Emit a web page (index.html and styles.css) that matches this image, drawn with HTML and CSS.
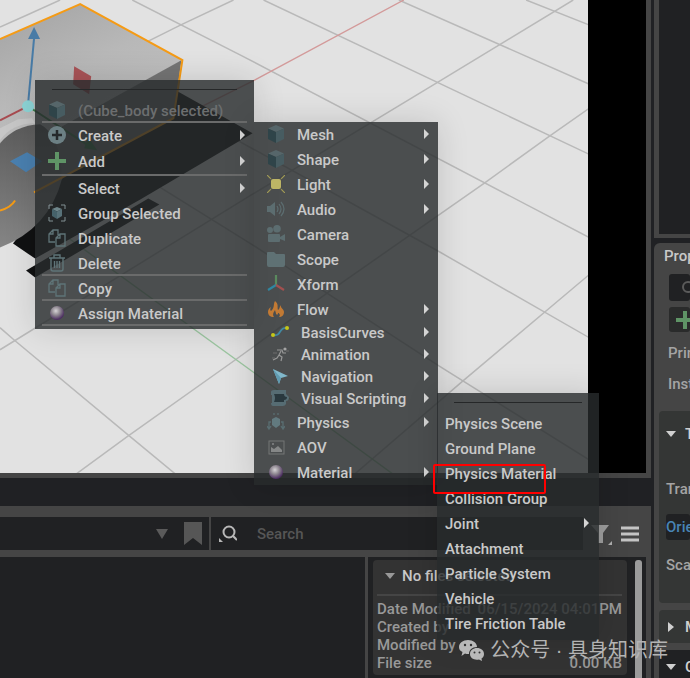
FILE: index.html
```html
<!DOCTYPE html>
<html lang="en">
<head>
<meta charset="utf-8">
<title>Stage editor</title>
<link rel="stylesheet" href="styles.css">
</head>
<body>
<svg class="defs" aria-hidden="true">
  <defs>
    <linearGradient id="topFace" x1="0" y1="0" x2="0.6" y2="1"><stop offset="0" stop-color="#a2a2a2"/><stop offset="0.5" stop-color="#b8b8b8"/><stop offset="1" stop-color="#c2c2c2"/></linearGradient>
    <linearGradient id="wheel" x1="0" y1="0" x2="0" y2="1"><stop offset="0" stop-color="#5c5c5c"/><stop offset="1" stop-color="#858585"/></linearGradient>
    <radialGradient id="ball" cx="0.42" cy="0.35" r="0.62"><stop offset="0" stop-color="#d6d3d6"/><stop offset="0.5" stop-color="#8e8790"/><stop offset="1" stop-color="#4d2f62"/></radialGradient>
    <symbol id="cube" viewBox="0 0 18 18"><path d="M9 0l8 3.500-8 3.500-8-3.500z" fill="#56666a"/><path d="M1 3.500l8 3.500v11l-8-4z" fill="#2f4449"/><path d="M17 3.500l-8 3.500v11l8-4z" fill="#475c61"/></symbol>
    <symbol id="plus-circle" viewBox="0 0 18 18"><circle cx="9" cy="9" r="9" fill="#6c8084"/><path d="M9 4v10M4 9h10" stroke="#25292b" stroke-width="2.500"/></symbol>
    <symbol id="plus" viewBox="0 0 18 18"><path d="M9 0v18M0 9h18" stroke="#5f9466" stroke-width="4"/></symbol>
    <symbol id="group" viewBox="0 0 18 18"><path d="M1 5V1h4M13 1h4v4M17 13v4h-4M5 17H1v-4" fill="none" stroke="#829094"/><path d="M9 3l5 2-5 2.500L4 5z" fill="#6f868b"/><path d="M4 5l5 2.500V15l-5-3z" fill="#46626a"/><path d="M14 5L9 7.500V15l5-3z" fill="#587279"/></symbol>
    <symbol id="copy" viewBox="0 0 18 18"><path d="M7 13H1V5l4-4h5v5M1 5h4V1M8 9l4-4h5v12H8zM8 9h4V5" fill="none" stroke="#5f7478" stroke-width="1.300"/></symbol>
    <symbol id="trash" viewBox="0 0 18 18"><path d="M1 4h16M6 4V1h6v3M3 4v11q0 2 2 2h8q2 0 2-2V4M6.500 7v7M9 7v7M11.500 7v7" fill="none" stroke="#5f7478" stroke-width="1.400"/></symbol>
    <symbol id="sphere" viewBox="0 0 18 18"><circle cx="9" cy="9" r="7" fill="url(#ball)"/></symbol>
    <symbol id="light" viewBox="0 0 18 18"><path d="M0 0l18 18M18 0L0 18" stroke="#a39c55" stroke-width="1.200"/><rect x="3" y="3" width="12" height="12" rx="3" fill="#4a4c4c"/><rect x="4" y="4" width="10" height="10" rx="2" fill="#bdb565"/></symbol>
    <symbol id="audio" viewBox="0 0 18 18"><path d="M0 6h3l5-4v14l-5-4H0z" fill="#5c6d70"/><path d="M10 6q2 3 0 6M12 4q4 5 0 10M14 2q6 7 0 14" fill="none" stroke="#5c6d70" stroke-width="1.200"/></symbol>
    <symbol id="camera" viewBox="0 0 18 18"><g fill="#5c6d70"><circle cx="3" cy="5" r="3"/><circle cx="10" cy="3.800" r="3.800"/><rect x="1" y="9" width="12" height="8" rx="1"/><path d="M13 12l5-3v7l-5-2z"/></g></symbol>
    <symbol id="folder" viewBox="0 0 18 18"><path d="M0 3q0-1 1-1h6l2 2h8q1 0 1 1v10q0 2-2 2H2q-2 0-2-2z" fill="#5f7174"/></symbol>
    <symbol id="axes" viewBox="0 0 18 18"><g fill="none" stroke-width="2.200"><path d="M9 10V0" stroke="#5a8a5e"/><path d="M9 10l-8 5" stroke="#2f86a0"/><path d="M9 10l8 5" stroke="#a2504f"/></g></symbol>
    <symbol id="flame" viewBox="0 0 18 18"><path d="M8 1c4 3 2 6 3 9 2-1 1-3 3-5-1 3 3 4 3 7 0 3-2 5-5 5 2-2 0-4-1-4 0 2-1 2-2 1 0-2-1-3-1-4-1 2-3 4-1 7-4 0-6-2-6-5 0-2 1-4 3-5-1 2-1 3 0 4C8 8 6 4 8 1z" fill="#c27a34"/></symbol>
    <symbol id="curve" viewBox="0 0 18 18"><path d="M2 12c9 2 5-8 14-7" fill="none" stroke="#4289a3" stroke-width="1.800"/><circle cx="2" cy="12" r="2" fill="#c5c618"/><circle cx="16" cy="5" r="2" fill="#c5c618"/></symbol>
    <symbol id="runner" viewBox="0 0 18 18"><circle cx="14" cy="4" r="1.600" fill="#a4a4a4"/><path d="M6 5l5 0 1 3 3 0M10 6L8 10l3 2-1 4M8 10l-2 3-4 2" fill="none" stroke="#989898" stroke-width="1.200"/><path d="M2 8h4M1 13h3M15 6h3" stroke="#777" stroke-width=".8"/></symbol>
    <symbol id="pointer" viewBox="0 0 18 18"><path d="M2 2l15 7-7 2-2 6z" fill="#80b8cb"/><path d="M2 2l8 9-2 6z" fill="#609bb1"/></symbol>
    <symbol id="script" viewBox="0 0 18 18"><path d="M3 1h12v4l3 3q0 4-3 4v3q-1 2-3 2H2q-2 0-2-3h1V6H0V3q0-2 3-2z" fill="#566c73"/><path d="M3 5h10q0 3 3 3 0 3-3 3v2H3q2-4 0-8z" fill="#29383e"/></symbol>
    <symbol id="physics" viewBox="0 0 18 18"><path d="M9 4l4 2v6l-4 3-4-3V6z" fill="#627a7f"/><path d="M7 0v2M11 0v2M4 9H2v7M0 13l2 3 2-3M14 9h2v7M14 13l2 3 2-3" fill="none" stroke="#596e72" stroke-width="1.300"/></symbol>
    <symbol id="picture" viewBox="0 0 18 18"><rect x="2" y="3" width="15" height="13" fill="none" stroke="#747676"/><path d="M4 14V9l3 2 4-3 4 4v2z" fill="#858787"/><circle cx="6" cy="6" r="1" fill="#858787"/></symbol>
  </defs>
</svg>

<div class="app">
  <main class="workspace">
    <section class="viewport" aria-label="Viewport">
      <svg class="scene" viewBox="0 0 588 472" preserveAspectRatio="xMinYMin slice" aria-hidden="true">
        <rect width="588" height="472" fill="#e2e2e2"/>
        <g fill="none" stroke="#b9b9b9" stroke-width="1.500">
          <path d="M525 0l63 25M398 0l190 84M263 0l325 154M132 0l108 55 348 182M150 92l288 159 150 86M155 184l95 59 188 122 150 94M0 327l15 13 114 95 46 38"/>
          <path d="M0 27l27-12L60 0M233 0l-53 25-40 20M572 0L437 82 250 195 120 275 0 349M588 108l-40 28-65 47-156 109-92 67-107 76-52 38M588 274l-126 106-108 93"/>
        </g>
        <path d="M403 0L254 80 62 176" stroke="#d39a9a" stroke-width="1.400" fill="none"/>
        <path d="M40 217l215 156 137 100" stroke="#9cc6a1" stroke-width="1.400" fill="none"/>
        <path d="M177 91l75 42-112 66L35 258l-22-15 50-66z" fill="#101112"/>
        <path d="M26 270l122-72 11 6L35 277z" fill="#101112"/>
        <path d="M0 39L80 4l102 56-120 66-62 30z" fill="url(#topFace)"/>
        <path d="M181 60L62 126l-28 66 139-74z" fill="#747474"/>
        <path d="M0 143q15-18 40-19 20 10 22 54-13 50-62 69z" fill="url(#wheel)"/>
        <path d="M0 140q12-17 35-17l-3-5-14 1L0 128z" fill="#c7c7c7"/>
        <path d="M0 39L80 4l102 56-9 58L34 192M0 210q11-3 15-10" fill="none" stroke="#f59b15" stroke-width="2"/>
        <path d="M74 66l17 10-2 18-16-10z" fill="#a95357"/>
        <path d="M0 120l28-14" stroke="#a84b50" stroke-width="2"/>
        <path d="M28 106l60 39" stroke="#387a45" stroke-width="2"/><path d="M88 137l9 13-13-2z" fill="#387a45"/>
        <path d="M28 104l6-66" stroke="#487ba6" stroke-width="2"/><path d="M34 27l6 12H28z" fill="#487ba6"/>
        <path d="M10 161l17-9 15 9-16 11z" fill="#4a80b0"/>
        <circle cx="28" cy="106" r="6" fill="#8dd5d7"/>
      </svg>
      <div class="letterbox"></div>
    </section>

    <section class="browser" aria-label="Content browser">
      <div class="toolbar">
        <div class="path">
          <svg width="12" height="10" aria-hidden="true"><path d="M0 0h12L6 10z" fill="#5a5a5a"/></svg>
          <svg width="18" height="23" aria-hidden="true"><path d="M0 0h18v23l-9-7-9 7z" fill="#565656"/></svg>
        </div>
        <label class="search">
          <svg width="18" height="18" aria-hidden="true"><circle cx="10" cy="7" r="5.500" fill="none" stroke="#b8b8b8" stroke-width="2"/><path d="M14 11l4 4" stroke="#b8b8b8" stroke-width="2.200"/><path d="M0 13l4 4H0z" fill="#b8b8b8"/></svg>
          <input type="text" placeholder="Search" aria-label="Search">
        </label>
        <button class="tool" aria-label="Filter"><svg width="22" height="22"><path d="M0 2h18l-6 8v10H7V10z" fill="#9d9d9d"/><path d="M21 18v4h-4z" fill="#b0b0b0"/></svg></button>
        <button class="tool" aria-label="Options"><svg width="18" height="16"><path d="M0 2h18M0 8h18M0 14h18" stroke="#c4c4c4" stroke-width="3"/></svg></button>
      </div>
      <div class="panes">
        <div class="files"></div>
        <div class="details">
          <div class="card">
            <h2><span class="tri-down dim"></span>No files selected</h2>
            <dl>
              <div><dt>Date Modified</dt><dd>06/15/2024 04:01PM</dd></div>
              <div><dt>Created by</dt><dd></dd></div>
              <div><dt>Modified by</dt><dd></dd></div>
              <div><dt>File size</dt><dd>0.00 KB</dd></div>
            </dl>
          </div>
          <div class="scroll"></div>
        </div>
      </div>
    </section>
  </main>

  <aside class="inspector">
    <div class="stage-tree"><div></div></div>
    <section class="property">
      <h2>Property</h2>
      <div class="field"><svg width="18" height="18" aria-hidden="true"><circle cx="7" cy="8" r="5" fill="none" stroke="#5a5a5a" stroke-width="2"/></svg></div>
      <button class="field add" aria-label="Add"><svg width="18" height="18"><use href="#plus"/></svg></button>
      <p>Prim Path</p>
      <p>Instanceable</p>
      <div class="box transform">
        <h3><span class="tri-down"></span>Transform</h3>
        <p>Translate</p>
        <p class="blue">Orient</p>
        <p>Scale</p>
      </div>
      <div class="box"><h3><span class="tri-right"></span>Material</h3></div>
      <div class="box dark"><h3><span class="tri-down"></span>Geometry</h3></div>
    </section>
  </aside>
</div>

<div class="menu context" role="menu">
  <hr>
  <div class="set line"><button disabled><svg><use href="#cube"/></svg>(Cube_body selected)</button></div>
  <div class="set line tall"><button class="more"><svg><use href="#plus-circle"/></svg>Create</button><button class="more"><svg><use href="#plus"/></svg>Add</button></div>
  <div class="set line"><button class="more"><svg></svg>Select</button><button><svg><use href="#group"/></svg>Group Selected</button><button><svg><use href="#copy"/></svg>Duplicate</button><button><svg><use href="#trash"/></svg>Delete</button></div>
  <div class="set line"><button><svg><use href="#copy"/></svg>Copy</button></div>
  <div class="set line"><button><svg><use href="#sphere"/></svg>Assign Material</button></div>
</div>

<div class="menu create" role="menu">
  <div class="set">
    <button class="more"><svg><use href="#cube"/></svg>Mesh</button>
    <button class="more"><svg><use href="#cube"/></svg>Shape</button>
    <button class="more"><svg><use href="#light"/></svg>Light</button>
    <button class="more"><svg><use href="#audio"/></svg>Audio</button>
    <button><svg><use href="#camera"/></svg>Camera</button>
    <button><svg><use href="#folder"/></svg>Scope</button>
    <button><svg><use href="#axes"/></svg>Xform</button>
    <button class="more"><svg><use href="#flame"/></svg>Flow</button>
  </div>
  <div class="set compact">
    <button class="more"><svg><use href="#curve"/></svg>BasisCurves</button>
    <button class="more"><svg><use href="#runner"/></svg>Animation</button>
    <button class="more"><svg><use href="#pointer"/></svg>Navigation</button>
    <button class="more"><svg><use href="#script"/></svg>Visual Scripting</button>
  </div>
  <div class="set">
    <button class="more"><svg><use href="#physics"/></svg>Physics</button>
    <button><svg><use href="#picture"/></svg>AOV</button>
    <button class="more"><svg><use href="#sphere"/></svg>Material</button>
  </div>
</div>

<div class="menu physics" role="menu">
  <hr>
  <div class="set">
    <button>Physics Scene</button>
    <button>Ground Plane</button>
    <button>Physics Material</button>
    <button>Collision Group</button>
    <button class="more">Joint</button>
    <button>Attachment</button>
    <button>Particle System</button>
    <button>Vehicle</button>
    <button>Tire Friction Table</button>
  </div>
</div>

<div class="highlight"></div>
<div class="watermark">
  <svg width="26" height="21" viewBox="0 0 26 21" aria-hidden="true"><path d="M9 0c5 0 9 3 9 7-5 0-8 3-8 7-2 0-3 0-4-.5L2.500 16l1-4C1 11 0 9 0 7c0-4 4-7 9-7z" fill="#b9b9b9"/><path d="M18 8c4 0 7 2.500 7 6 0 2-1 3.500-2.500 4.500L23 21l-3-1.500c-5 1-9-1.500-9-5.500 0-3.500 3-6 7-6z" fill="#b9b9b9"/><g fill="#333"><circle cx="6" cy="5" r="1.200"/><circle cx="12" cy="5" r="1.200"/><circle cx="15.500" cy="12.500" r="1"/><circle cx="20.500" cy="12.500" r="1"/></g></svg>
  <span>公众号 · 具身知识库</span>
</div>
</body>
</html>
```
FILE: styles.css
```css
* { box-sizing: border-box; }

body {
  margin: 0;
  overflow: hidden;
  background: #202124;
  color: #c9c9c9;
  font: 500 15px/18px Roboto, "Noto Sans CJK SC", sans-serif;
}

button, input { font: inherit; color: inherit; border: 0; padding: 0; background: none; }
h2, h3, p, dl, dd { margin: 0; font: inherit; }
svg { display: block; flex: none; }
.defs { position: absolute; width: 0; height: 0; }

.app { display: flex; gap: 3px; height: 100vh; }
.workspace { flex: 1; min-width: 0; display: flex; flex-direction: column; gap: 28px; }

/* viewport */
.viewport {
  flex: 1;
  min-height: 0;
  display: flex;
  border: solid #454545;
  border-width: 0 5px 5px 0;
}
.scene { flex: 1; min-width: 0; height: 100%; }
.letterbox { flex: none; width: 58px; background: #000; }

/* content browser */
.browser { flex: none; height: 172px; display: flex; flex-direction: column; background: #454545; }
.toolbar { display: flex; align-items: center; height: 51px; padding: 4px 12px 0 0; }
.path {
  flex: none;
  width: 211px;
  height: 33px;
  display: flex;
  align-items: center;
  justify-content: flex-end;
  gap: 16px;
  padding-right: 7px;
  border-right: 2px solid #454545;
  background: #202123;
}
.search { flex: 1; min-width: 0; height: 33px; display: flex; align-items: center; gap: 20px; padding-left: 8px; background: #202123; }
.search input { flex: 1; min-width: 0; }
.search input::placeholder { color: #565656; opacity: 1; }
.tool { margin-left: 8px; }
.panes { flex: 1; min-height: 0; display: flex; padding-right: 5px; }
.files { flex: 1; background: #202123; }
.details { flex: none; width: 278px; display: flex; gap: 8px; padding: 3px 4px 3px 5px; margin-left: 3px; background: #202123; }
.card { flex: 1; padding: 0 5px 0 4px; border-radius: 4px; background: #333; }
.card h2 { display: flex; align-items: center; gap: 7px; height: 36px; padding: 0 0 2px 8px; border-bottom: 2px solid #454545; }
.card dl { padding-top: 4px; color: #999; }
.card dl div { display: flex; justify-content: space-between; height: 18px; line-height: 18px; }
.scroll { flex: none; width: 7px; margin-bottom: -3px; border-radius: 3px 3px 0 0; background: #9b9b9b; }

.tri-down { flex: none; border: 5px solid transparent; border-top: 6px solid currentColor; border-bottom: 0; }
.tri-right { flex: none; margin: 0 2px; border: 5px solid transparent; border-left: 6px solid currentColor; border-right: 0; }
.dim { color: #999; }

/* inspector */
.inspector { flex: none; width: 36px; display: flex; flex-direction: column; gap: 5px; overflow: hidden; white-space: nowrap; }
.stage-tree { flex: none; height: 238px; padding: 0 0 4px 5px; background: #454545; }
.stage-tree div { height: 100%; background: #202123; }
.property { flex: 1; display: flex; flex-direction: column; padding-left: 5px; border-radius: 6px 0 0; background: #454545; color: #a4a4a4; }
.property h2 { height: 31px; padding: 4px 0 0 5px; color: #c9c9c9; }
.field { display: flex; align-items: center; flex: none; height: 27px; margin: 0 0 6px 10px; padding-left: 12px; border-radius: 3px; background: #202123; }
.add { height: 25px; padding-left: 7px; margin-bottom: 12px; background: #2a2b2b; }
.property > p { height: 31px; padding-left: 9px; }
.box { flex: none; height: 33px; margin-bottom: 7px; padding-left: 7px; border-radius: 4px 0 0 4px; background: #343635; }
.box h3 { display: flex; align-items: center; gap: 9px; height: 33px; color: #d0d0d0; }
.transform { height: 192px; margin-top: 5px; padding-top: 6px; }
.transform h3 { margin-bottom: 26px; }
.transform p { height: 26px; line-height: 26px; margin-bottom: 12px; }
.transform .blue { color: #4884b4; background: #202123; border-radius: 3px; }
.dark { background: #202123; }

/* menus */
.menu { position: absolute; background: rgba(40, 43, 44, .81); box-shadow: 0 0 30px rgba(0, 0, 0, .14); }
.menu hr { height: 1px; margin: 9px 17px 8px; border: 0; background: #252728; }
.set { display: flex; flex-direction: column; }
.menu button { display: flex; align-items: center; gap: 12px; height: 25px; padding: 0 9px 0 13px; text-align: left; white-space: nowrap; }
.menu button svg { width: 18px; height: 18px; margin-top: -2px; }
.menu button:disabled { color: #6c6e6f; }
.menu .more::after { content: ""; margin: -2px 0 0 auto; border: 5px solid transparent; border-left: 5px solid #d4d4d4; border-right: 0; }

.context { left: 35px; top: 80px; width: 219px; padding-bottom: 3px; }
.context .line { background: linear-gradient(#6a6b6b, #6a6b6b) 50% 100% / calc(100% - 14px) 2px no-repeat; }
.tall button { height: 26px; }
.tall { padding-bottom: 1px; }
.create { left: 254px; top: 122px; width: 184px; }
.compact button { height: 22px; padding-left: 17px; }
.physics { left: 437px; top: 393px; width: 162px; padding-bottom: 4px; }
.physics button { padding-left: 8px; }
.physics .more { padding-right: 10px; }

.highlight { position: absolute; left: 433px; top: 464px; width: 113px; height: 30px; border: 2px solid #f00; border-radius: 2px; }
.watermark { position: absolute; right: 22px; bottom: 14px; display: flex; align-items: center; gap: 5px; color: #b4b4b4; font: 400 20px/28px "Liberation Sans", "Noto Sans CJK SC", sans-serif; }
```
